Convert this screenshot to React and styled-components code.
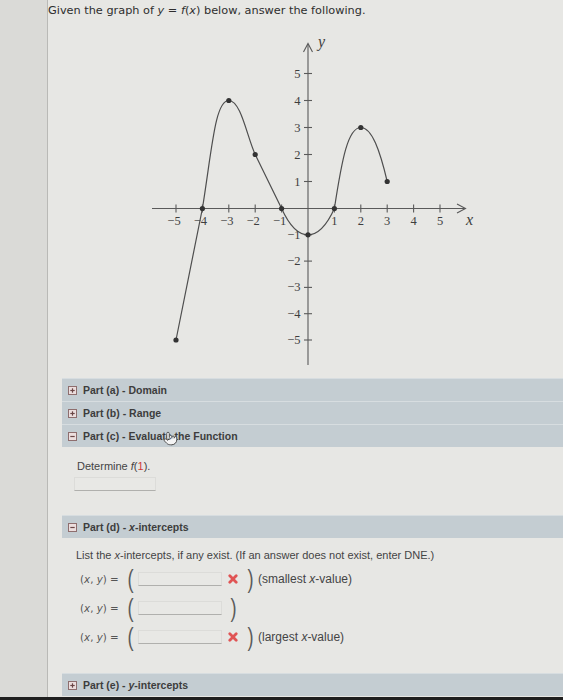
import React from 'react';
import styled, { createGlobalStyle } from 'styled-components';
import { Pointer } from 'lucide-react';

const GlobalStyle = createGlobalStyle`
  html, body {
    margin: 0;
    padding: 0;
  }
  body {
    background: #d9d9d6;
    font-family: "Liberation Sans", Arial, sans-serif;
  }
`;

const Page = styled.div`
  display: flex;
  flex-direction: column;
  width: 563px;
  height: 700px;
  overflow: hidden;
`;

const Main = styled.div`
  display: flex;
  flex: 1;
  min-height: 0;
`;

const Gutter = styled.div`
  width: 47px;
  background: #dadad7;
`;

const Panel = styled.div`
  flex: 1;
  display: flex;
  flex-direction: column;
  background: #e7e7e4;
  border-left: 1px solid #b9b9b6;
`;

const Bezel = styled.div`
  height: 3px;
  background: #1f1f1f;
`;

const Question = styled.div`
  padding-top: 3px;
  font-family: "DejaVu Sans", Verdana, sans-serif;
  font-size: 11.3px;
  line-height: 15px;
  color: #2e2e2e;
  white-space: nowrap;
`;

const Var = styled.i`
  font-style: italic;
`;

const GraphBox = styled.svg`
  display: block;
  margin: 13px 0 0 92px;
`;

const Accordion = styled.div`
  display: flex;
  flex-direction: column;
  margin: 9px 0 0 14px;
`;

const Bar = styled.div`
  position: relative;
  display: flex;
  align-items: center;
  gap: 6px;
  height: 22px;
  padding-left: 6px;
  border-top: 1px solid #d7dde0;
  background: #c4cdd2;
  font-size: 10.5px;
  font-weight: bold;
  color: #3d3d3d;
  white-space: nowrap;
`;

const BarLabel = styled.span`
  line-height: 14px;
`;

const Cursor = styled.div`
  position: absolute;
  left: 101px;
  top: 6px;
  line-height: 0;
`;

const Body = styled.div`
  display: flex;
  flex-direction: column;
  padding: ${(p) => p.pad};
  font-size: 11px;
  color: #444;
`;

const Line = styled.div`
  line-height: 14px;
  white-space: nowrap;
`;

const Red = styled.span`
  color: #d03a3a;
`;

const AnswerBox = styled.div`
  width: ${(p) => p.w}px;
  height: 12px;
  margin: ${(p) => p.m};
  border: 1px solid #dcdcd9;
  border-bottom-color: #b0b0ad;
  background: #e8e8e5;
`;

const Rows = styled.div`
  display: flex;
  flex-direction: column;
  margin-top: 2px;
  padding-left: 4px;
`;

const Row = styled.div`
  display: flex;
  align-items: center;
  height: 29px;
  white-space: nowrap;
`;

const Pair = styled.span`
  width: 46px;
  font-family: "DejaVu Sans", Verdana, sans-serif;
  font-size: 10.3px;
  color: #555;
`;

const Paren = styled.span`
  width: 10px;
  font-size: 26px;
  line-height: 1;
  color: #5a5a5a;
  transform: scaleX(0.7);
`;

const Wrong = styled.svg`
  margin: 0 8px 0 6px;
`;

const Spacer = styled.span`
  width: 7px;
`;

const Note = styled.span`
  margin-left: 2px;
  font-size: 12px;
  color: #444;
`;

const ux = 26.4;
const X = (x) => 308 + ux * x;
const Y = (y) => 209.5 - (y >= 0 ? 27 : 26.3) * y;

function Graph() {
  const xs = [-5, -4, -3, -2, -1, 1, 2, 3, 4, 5];
  const dots = [
    [-5, -5], [-4, 0], [-3, 4], [-2, 2], [-1, 0], [0, -1], [1, 0], [2, 3], [3, 1],
  ];
  const curve = [
    `M${X(-5)},${Y(-5)} L${X(-4)},${Y(0)}`,
    `C212,150 215,${Y(4)} ${X(-3)},${Y(4)}`,
    `C241,${Y(4)} 247,138 ${X(-2)},${Y(2)}`,
    `L${X(-1)},${Y(0)}`,
    `C290,228 298,${Y(-1)} ${X(0)},${Y(-1)}`,
    `C318,${Y(-1)} 326,228 ${X(1)},${Y(0)}`,
    `C342,160 348,${Y(3)} ${X(2)},${Y(3)}`,
    `C372,${Y(3)} 380,152 ${X(3)},${Y(1)}`,
  ].join(' ');

  return (
    <GraphBox width="340" height="338" viewBox="140 32 340 338">
      <g stroke="#5a5a5a" strokeWidth="1.1" fill="none">
        <line x1="152" y1="209.5" x2="465" y2="209.5" />
        <polyline points="457,205 465.5,209.5 457,214" />
        <line x1="308" y1="366" x2="308" y2="45" />
        <polyline points="303.5,53 308,44.5 312.5,53" />
        {xs.map((i) => (
          <line key={`tx${i}`} x1={X(i)} y1="205.5" x2={X(i)} y2="213.5" />
        ))}
        {xs.map((j) => (
          <line key={`ty${j}`} x1="304" y1={Y(j)} x2="312" y2={Y(j)} />
        ))}
        <path d={curve} stroke="#4e4e4e" strokeWidth="1.2" />
      </g>
      <g fontFamily="'Liberation Serif', 'DejaVu Serif', serif" fontSize="12.5" fill="#3e3e3e">
        {xs.map((i) => (
          <text key={`lx${i}`} x={X(i) + (i < 0 ? -2 : 0)} y="226" textAnchor="middle">
            {i < 0 ? `\u2212${-i}` : i}
          </text>
        ))}
        {xs.map((j) => (
          <text key={`ly${j}`} x="300.5" y={Y(j) + 4} textAnchor="end">
            {j < 0 ? `\u2212${-j}` : j}
          </text>
        ))}
        <text x="318" y="48" fontSize="16" fontStyle="italic">y</text>
        <text x="466" y="226" fontSize="16" fontStyle="italic">x</text>
      </g>
      <g fill="#333">
        {dots.map(([a, b]) => (
          <circle key={`d${a}${b}`} cx={X(a)} cy={Y(b)} r="2.6" />
        ))}
      </g>
    </GraphBox>
  );
}

function Toggle({ open }) {
  return (
    <svg width="9" height="9" viewBox="0 0 9 9">
      <rect x="0.5" y="0.5" width="8" height="8" fill="#ecdede" stroke="#8e6e6e" />
      <line x1="2.3" y1="4.5" x2="6.7" y2="4.5" stroke="#6a4545" strokeWidth="1.2" />
      {!open && <line x1="4.5" y1="2.3" x2="4.5" y2="6.7" stroke="#6a4545" strokeWidth="1.2" />}
    </svg>
  );
}

function Cross() {
  return (
    <Wrong width="10" height="10" viewBox="0 0 10 10">
      <g stroke="#e05454" strokeWidth="2.8" strokeLinecap="round">
        <line x1="1.8" y1="1.8" x2="8.2" y2="8.2" />
        <line x1="8.2" y1="1.8" x2="1.8" y2="8.2" />
      </g>
    </Wrong>
  );
}

function InterceptRow({ note, noteVar }) {
  return (
    <Row>
      <Pair>
        (<Var>x</Var>, <Var>y</Var>) =
      </Pair>
      <Paren>(</Paren>
      <AnswerBox w={82} m="0 0 0 2px" />
      {note ? <Cross /> : <Spacer />}
      <Paren>)</Paren>
      {note && (
        <Note>
          ({note} <Var>{noteVar}</Var>-value)
        </Note>
      )}
    </Row>
  );
}

export default function App() {
  return (
    <Page>
      <GlobalStyle />
      <Main>
        <Gutter />
        <Panel>
          <Question>
            Given the graph of <Var>y</Var> = <Var>f</Var>(<Var>x</Var>) below, answer the following.
          </Question>
          <Graph />
          <Accordion>
            <Bar>
              <Toggle />
              <BarLabel>Part (a) - Domain</BarLabel>
            </Bar>
            <Bar>
              <Toggle />
              <BarLabel>Part (b) - Range</BarLabel>
            </Bar>
            <Bar>
              <Toggle open />
              <BarLabel>Part (c) - Evaluate the Function</BarLabel>
              <Cursor>
                <Pointer size={15} color="#555" fill="#f4f4f4" strokeWidth={1.6} />
              </Cursor>
            </Bar>
            <Body pad="12px 0 24px 15px">
              <Line>
                Determine <Var>f</Var>(<Red>1</Red>).
              </Line>
              <AnswerBox w={80} m="4px 0 0 -3px" />
            </Body>
            <Bar>
              <Toggle open />
              <BarLabel>
                Part (d) - <Var>x</Var>-intercepts
              </BarLabel>
            </Bar>
            <Body pad="10px 0 22px 14px">
              <Line>
                List the <Var>x</Var>-intercepts, if any exist. (If an answer does not exist, enter DNE.)
              </Line>
              <Rows>
                <InterceptRow note="smallest" noteVar="x" />
                <InterceptRow />
                <InterceptRow note="largest" noteVar="x" />
              </Rows>
            </Body>
            <Bar>
              <Toggle />
              <BarLabel>
                Part (e) - <Var>y</Var>-intercepts
              </BarLabel>
            </Bar>
          </Accordion>
        </Panel>
      </Main>
      <Bezel />
    </Page>
  );
}
